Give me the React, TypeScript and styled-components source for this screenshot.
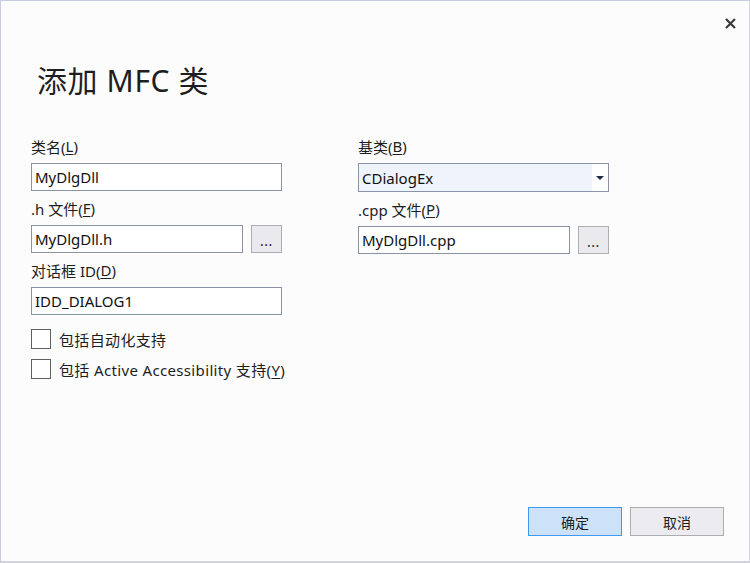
import React from "react";
import styled, { createGlobalStyle } from "styled-components";

const Global = createGlobalStyle`
  html, body { margin: 0; padding: 0; background: #fcfcfc; }
  * { box-sizing: border-box; }
`;

const FONT = `"Noto Sans", "Noto Sans CJK SC", sans-serif`;

const Window = styled.div`
  width: 750px;
  height: 563px;
  background: #fcfcfc;
  border-left: 1px solid #c9cce0;
  border-top: 1px solid #c9cce0;
  border-right: 1px solid #d4d6e2;
  border-bottom: 2px solid #d2d3da;
  display: flex;
  flex-direction: column;
  font-family: ${FONT};
  color: #1b1b1b;
`;

const TopBar = styled.div`
  height: 40px;
  display: flex;
  justify-content: flex-end;
  align-items: flex-start;
  padding: 15px 12px 0 0;
`;

const CloseButton = styled.button`
  width: 14px;
  height: 14px;
  padding: 0;
  border: none;
  background: transparent;
  display: flex;
  align-items: center;
  justify-content: center;
`;

const Title = styled.h1`
  margin: 20px 0 0 36px;
  font-size: 30px;
  font-weight: 400;
  line-height: 40px;
  letter-spacing: 0.6px;
  color: #1e1e1e;
`;

const Form = styled.div`
  margin-top: 28px;
  padding-left: 30px;
  display: grid;
  grid-template-columns: 251px 251px;
  column-gap: 76px;
  align-items: start;
`;

const Column = styled.div`
  display: flex;
  flex-direction: column;
`;

const Label = styled.div`
  height: 34px;
  display: flex;
  align-items: center;
  font-size: 15px;
  color: #1e1e1e;
`;

const Key = styled.span`
  text-decoration: underline;
  text-underline-offset: 2px;
`;

const FieldRow = styled.div`
  display: flex;
  gap: 8px;
`;

const TextBox = styled.div<{ $w?: number }>`
  width: ${(p) => (p.$w ? `${p.$w}px` : "100%")};
  height: 28px;
  border: 1px solid #8a93a7;
  background: #ffffff;
  display: flex;
  align-items: center;
  padding-left: 3px;
  font-size: 15px;
  color: #111;
`;

const BrowseButton = styled.div`
  width: 31px;
  height: 28px;
  border: 1px solid #adadb2;
  background: #e9e9ee;
  display: flex;
  align-items: center;
  justify-content: center;
  font-size: 14px;
  padding-top: 2px;
  letter-spacing: 0.5px;
  color: #222;
`;

const Combo = styled.div`
  height: 29px;
  border: 1px solid #8a93a7;
  display: flex;
  background: #ffffff;
`;

const ComboText = styled.div`
  flex: 1;
  background: #eff3fc;
  display: flex;
  align-items: center;
  padding-left: 3px;
  font-size: 15px;
  color: #111;
`;

const ComboArrow = styled.div`
  width: 16px;
  display: flex;
  align-items: center;
  justify-content: center;
`;

const Checks = styled.div`
  margin-top: 14px;
  padding-left: 30px;
  display: flex;
  flex-direction: column;
  gap: 10px;
`;

const CheckRow = styled.label`
  display: flex;
  align-items: center;
  gap: 8px;
  font-size: 15px;
  letter-spacing: 0.35px;
  color: #1e1e1e;
  height: 20px;
`;

const Box = styled.span`
  width: 20px;
  height: 20px;
  border: 1px solid #5f5f5f;
  background: #ffffff;
`;

const Spacer = styled.div`
  flex: 1;
`;

const Footer = styled.div`
  display: flex;
  justify-content: flex-end;
  gap: 8px;
  padding: 0 25px 25px 0;
`;

const DialogButton = styled.button<{ $primary?: boolean }>`
  width: 94px;
  height: 29px;
  border: 1px solid ${(p) => (p.$primary ? "#3f98f2" : "#adadad")};
  background: ${(p) => (p.$primary ? "#cce2f8" : "#ecebf0")};
  font-family: ${FONT};
  font-size: 14px;
  color: #1e1e1e;
  padding: 0;
`;

export default function App() {
  return (
    <>
      <Global />
      <Window>
        <TopBar>
          <CloseButton aria-label="关闭">
            <svg width="11" height="11" viewBox="0 0 11 11">
              <path d="M1 1 L10 10 M10 1 L1 10" stroke="#3a3a3a" strokeWidth="2.2" />
            </svg>
          </CloseButton>
        </TopBar>
        <Title>添加 MFC 类</Title>
        <Form>
          <Column>
            <Label>
              类名(<Key>L</Key>)
            </Label>
            <TextBox>MyDlgDll</TextBox>
            <Label>
              .h 文件(<Key>F</Key>)
            </Label>
            <FieldRow>
              <TextBox $w={212}>MyDlgDll.h</TextBox>
              <BrowseButton>...</BrowseButton>
            </FieldRow>
            <Label>
              对话框 ID(<Key>D</Key>)
            </Label>
            <TextBox>IDD_DIALOG1</TextBox>
          </Column>
          <Column>
            <Label>
              基类(<Key>B</Key>)
            </Label>
            <Combo>
              <ComboText>CDialogEx</ComboText>
              <ComboArrow>
                <svg width="8" height="4" viewBox="0 0 8 4">
                  <path d="M0 0 H8 L4 4 Z" fill="#1f2a44" />
                </svg>
              </ComboArrow>
            </Combo>
            <Label>
              .cpp 文件(<Key>P</Key>)
            </Label>
            <FieldRow>
              <TextBox $w={212}>MyDlgDll.cpp</TextBox>
              <BrowseButton>...</BrowseButton>
            </FieldRow>
          </Column>
        </Form>
        <Checks>
          <CheckRow>
            <Box />
            包括自动化支持
          </CheckRow>
          <CheckRow>
            <Box />
            <span>
              包括 Active Accessibility 支持(<Key>Y</Key>)
            </span>
          </CheckRow>
        </Checks>
        <Spacer />
        <Footer>
          <DialogButton $primary>确定</DialogButton>
          <DialogButton>取消</DialogButton>
        </Footer>
      </Window>
    </>
  );
}
